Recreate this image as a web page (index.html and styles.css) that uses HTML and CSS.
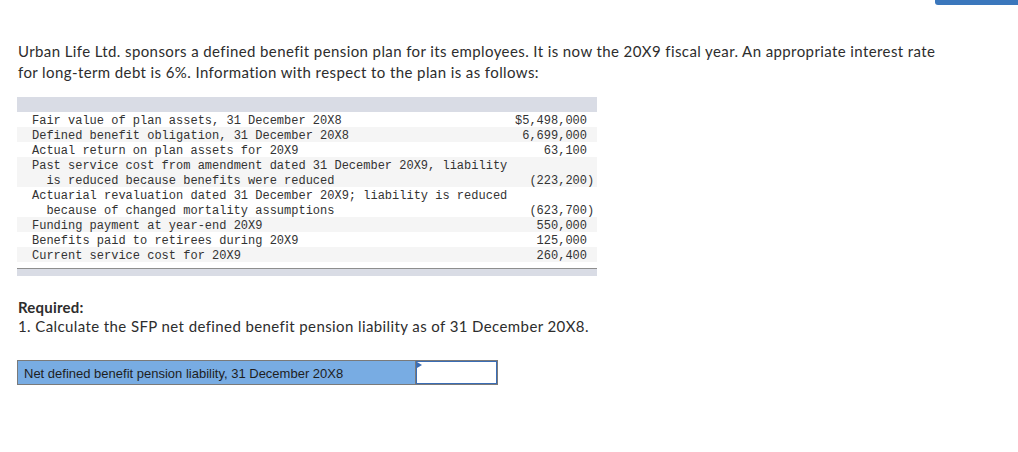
FILE: index.html
```html
<!DOCTYPE html>
<html>
<head>
<meta charset="utf-8">
<link rel="stylesheet" href="styles.css">
</head>
<body>
<div class="topbar"><div class="topbtn"></div></div>
<div class="page">
  <p class="intro">Urban Life Ltd. sponsors a defined benefit pension plan for its employees. It is now the 20X9 fiscal year. An appropriate interest rate for long-term debt is 6%. Information with respect to the plan is as follows:</p>

  <div class="data">
    <div class="data-head"></div>
    <div class="row">
      <div class="lbl">Fair value of plan assets, 31 December 20X8</div>
      <div class="val">$5,498,000</div>
    </div>
    <div class="row alt">
      <div class="lbl">Defined benefit obligation, 31 December 20X8</div>
      <div class="val">6,699,000</div>
    </div>
    <div class="row">
      <div class="lbl">Actual return on plan assets for 20X9</div>
      <div class="val">63,100</div>
    </div>
    <div class="row alt">
      <div class="lbl">Past service cost from amendment dated 31 December 20X9, liability<br><span class="cont">is reduced because benefits were reduced</span></div>
      <div class="val">(223,200<span class="paren">)</span></div>
    </div>
    <div class="row">
      <div class="lbl">Actuarial revaluation dated 31 December 20X9; liability is reduced<br><span class="cont">because of changed mortality assumptions</span></div>
      <div class="val">(623,700<span class="paren">)</span></div>
    </div>
    <div class="row alt">
      <div class="lbl">Funding payment at year-end 20X9</div>
      <div class="val">550,000</div>
    </div>
    <div class="row">
      <div class="lbl">Benefits paid to retirees during 20X9</div>
      <div class="val">125,000</div>
    </div>
    <div class="row alt">
      <div class="lbl">Current service cost for 20X9</div>
      <div class="val">260,400</div>
    </div>
    <div class="data-foot"></div>
  </div>

  <div class="required">
    <div class="req-title">Required:</div>
    <div class="req-text">1. Calculate the SFP net defined benefit pension liability as of 31 December 20X8.</div>
  </div>

  <div class="answer">
    <div class="answer-label">Net defined benefit pension liability, 31 December 20X8</div>
    <div class="answer-input"><span class="flag"></span></div>
  </div>
</div>
</body>
</html>
```

FILE: styles.css
```css
html, body {
  margin: 0;
  padding: 0;
  background: #ffffff;
}

.topbar {
  height: 0;
  display: flex;
  justify-content: flex-end;
}

.topbtn {
  width: 83px;
  height: 5px;
  background: #3b77bc;
  border-radius: 0 0 0 3px;
}

.page {
  padding: 41px 0 0 18px;
}

.intro {
  margin: 0;
  width: 935px;
  font-family: Lato, "Open Sans", sans-serif;
  font-size: 15px;
  letter-spacing: 0.4px;
  font-variant-ligatures: none;
  line-height: 21px;
  color: #2d2d2d;
}

.data {
  margin: 14px 0 0 -1px;
  width: 580px;
  font-family: "Liberation Mono", "DejaVu Sans Mono", monospace;
  font-size: 12px;
  line-height: 15px;
  color: #333333;
}

.data-head {
  height: 15px;
  background: #d9dce5;
}

.row {
  display: flex;
  justify-content: space-between;
  align-items: flex-end;
  padding: 2px 10px 0 15px;
  margin-bottom: -2px;
  background: transparent;
}

.row.alt {
  background: linear-gradient(#f5f5f5, #f5f5f5) top left / 100% calc(100% - 2px) no-repeat;
}

.lbl {
  white-space: pre;
}

.cont {
  padding-left: 14.4px;
}

.val {
  text-align: right;
  white-space: pre;
}

.paren {
  margin-right: -7.2px;
}

.data-foot {
  margin-top: 6px;
  height: 7px;
  background: #d9dce5;
  border-top: 1px solid #8e8e8e;
}

.required {
  margin-top: 22px;
  font-family: Lato, "Open Sans", sans-serif;
  font-size: 15px;
  letter-spacing: 0.4px;
  font-variant-ligatures: none;
  line-height: 19px;
  color: #2d2d2d;
}

.req-title {
  font-weight: bold;
  letter-spacing: 0.2px;
}

.answer {
  margin: 24px 0 0 -1px;
  display: flex;
  height: 25px;
  font-family: "Liberation Sans", Arial, sans-serif;
  font-size: 13px;
}

.answer-label {
  box-sizing: border-box;
  width: 399px;
  background: #78ace3;
  border: 1px solid #7a7a7a;
  padding: 1px 0 0 6px;
  display: flex;
  align-items: center;
  color: #1e1e1e;
}

.answer-input {
  position: relative;
  box-sizing: border-box;
  width: 82px;
  background: #ffffff;
  border: 1px solid #7a7a7a;
  border-left: 0;
  box-shadow: inset 0 0 0 1px #3a6db5;
}

.flag {
  position: absolute;
  left: 1px;
  top: 1px;
  width: 0;
  height: 0;
  border-top: 3px solid transparent;
  border-bottom: 3px solid transparent;
  border-left: 5px solid #3a6db5;
}
```
